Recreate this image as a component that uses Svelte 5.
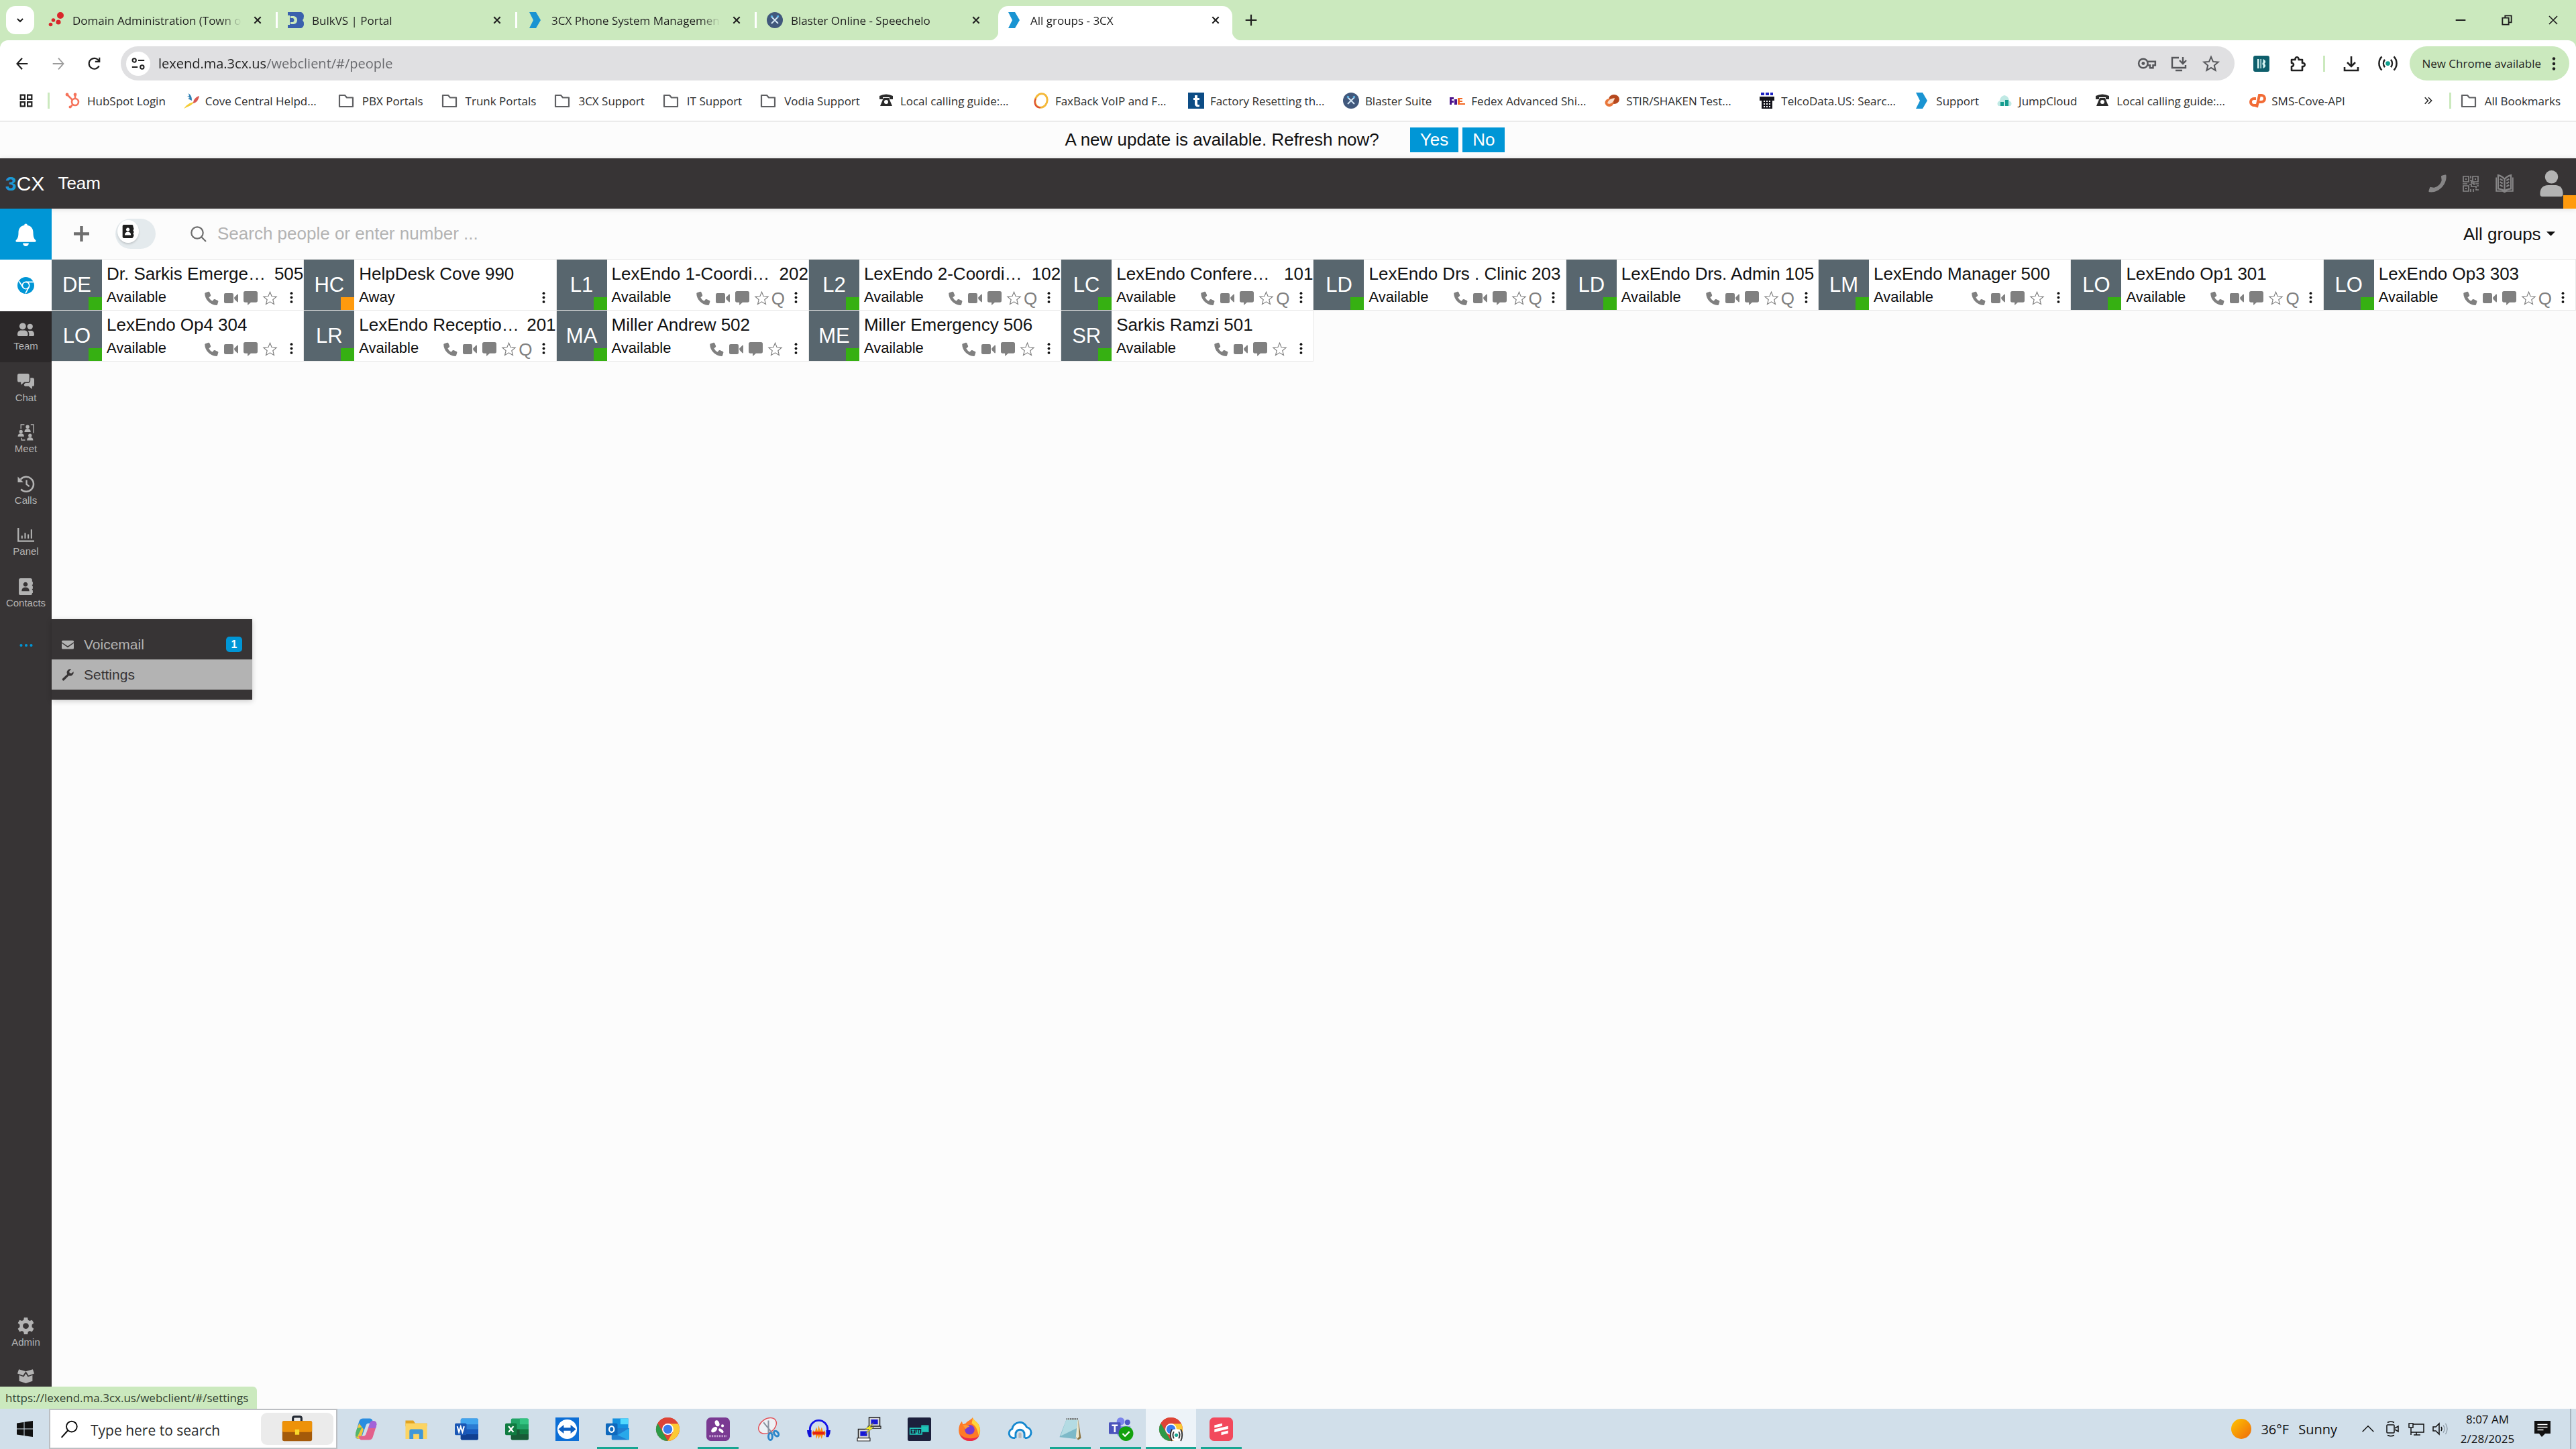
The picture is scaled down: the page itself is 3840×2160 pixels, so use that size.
<script>
     const tabs = [
          { title: 'Domain Administration (Town o', icon: 'dots' },
          { title: 'BulkVS | Portal', icon: 'bulk' },
          { title: '3CX Phone System Managemen', icon: 'arrow3cx' },
          { title: 'Blaster Online - Speechelo', icon: 'blaster' },
          { title: 'All groups - 3CX', icon: 'arrow3cx', active: true },
     ];

     const bookmarks = [
          { title: 'HubSpot Login', icon: 'hubspot' },
          { title: 'Cove Central Helpd...', icon: 'cove', long: true },
          { title: 'PBX Portals', icon: 'folder', folder: true },
          { title: 'Trunk Portals', icon: 'folder', folder: true },
          { title: '3CX Support', icon: 'folder', folder: true },
          { title: 'IT Support', icon: 'folder', folder: true },
          { title: 'Vodia Support', icon: 'folder', folder: true },
          { title: 'Local calling guide:...', icon: 'oldphone', long: true },
          { title: 'FaxBack VoIP and F...', icon: 'fax', long: true },
          { title: 'Factory Resetting th...', icon: 'tsquare', long: true },
          { title: 'Blaster Suite', icon: 'blaster' },
          { title: 'Fedex Advanced Shi...', icon: 'fedex', long: true },
          { title: 'STIR/SHAKEN Test...', icon: 'stir', long: true },
          { title: 'TelcoData.US: Searc...', icon: 'telco', long: true },
          { title: 'Support', icon: 'arrow3cx' },
          { title: 'JumpCloud', icon: 'jump' },
          { title: 'Local calling guide:...', icon: 'oldphone', long: true },
          { title: 'SMS-Cove-API', icon: 'cpanel' },
     ];

     const people = [
          { initials: 'DE', name: 'Dr. Sarkis Emerge…', ext: '505', cut: true },
          { initials: 'HC', name: 'HelpDesk Cove', ext: '990', away: true },
          { initials: 'L1', name: 'LexEndo 1-Coordi…', ext: '202', cut: true, queue: true },
          { initials: 'L2', name: 'LexEndo 2-Coordi…', ext: '102', cut: true, queue: true },
          { initials: 'LC', name: 'LexEndo Confere…', ext: '101', cut: true, queue: true },
          { initials: 'LD', name: 'LexEndo Drs . Clinic', ext: '203', queue: true },
          { initials: 'LD', name: 'LexEndo Drs. Admin', ext: '105', queue: true },
          { initials: 'LM', name: 'LexEndo Manager', ext: '500' },
          { initials: 'LO', name: 'LexEndo Op1', ext: '301', queue: true },
          { initials: 'LO', name: 'LexEndo Op3', ext: '303', queue: true },
          { initials: 'LO', name: 'LexEndo Op4', ext: '304' },
          { initials: 'LR', name: 'LexEndo Receptio…', ext: '201', cut: true, queue: true },
          { initials: 'MA', name: 'Miller Andrew', ext: '502' },
          { initials: 'ME', name: 'Miller Emergency', ext: '506' },
          { initials: 'SR', name: 'Sarkis Ramzi', ext: '501' },
     ];

     const nav = [
          { label: 'Team', icon: 'team', active: true },
          { label: 'Chat', icon: 'chats' },
          { label: 'Meet', icon: 'meet' },
          { label: 'Calls', icon: 'history' },
          { label: 'Panel', icon: 'chart' },
          { label: 'Contacts', icon: 'contacts' },
     ];

     const apps = [
          { name: 'Copilot', icon: 'copilot' },
          { name: 'File Explorer', icon: 'explorer' },
          { name: 'Word', icon: 'word' },
          { name: 'Excel', icon: 'excel' },
          { name: 'TeamViewer', icon: 'teamviewer' },
          { name: 'Outlook', icon: 'outlook', open: true },
          { name: 'Chrome', icon: 'chrome' },
          { name: 'Splashtop Business', icon: 'splashtop', open: true },
          { name: 'Snipping Tool', icon: 'snip' },
          { name: 'Audacity', icon: 'audacity' },
          { name: 'PuTTY', icon: 'putty' },
          { name: 'TuneIn', icon: 'tune' },
          { name: 'Firefox', icon: 'firefox' },
          { name: 'Cloud Drive', icon: 'cloud' },
          { name: 'Notepad', icon: 'notepad', open: true },
          { name: 'Teams', icon: 'teams', open: true },
          { name: 'Chrome window', icon: 'chromecast', open: true, current: true },
          { name: 'Recorder', icon: 'recorder', open: true },
     ];

     const chromeDisc = `<circle cx="12" cy="12" r="12" fill="#dd4436"/><path d="M1.6 6 7 15.2 12 24A12 12 0 0 1 1.6 6z" fill="#2c9a48"/><path d="M12 24 17.2 15 12 6.4H22.6A12 12 0 0 1 12 24z" fill="#fcc934"/><path d="M1.6 6A12 12 0 0 1 22.6 6.4H12L7 9z" fill="#dd4436"/><circle cx="12" cy="12" r="5.8" fill="#fff"/><circle cx="12" cy="12" r="4.6" fill="#3b7ded"/>`;

     // Every icon is drawn on a 24 x 24 grid.
     const icons = {
          chevron: '<path d="m5 8.500 7 7 7-7" fill="none" stroke="currentColor" stroke-width="3.500"/>',
          close: '<path d="m4 4 16 16M20 4 4 20" fill="none" stroke="currentColor" stroke-width="3.600"/>',
          thinclose: '<path d="m3 3 18 18M21 3 3 21" fill="none" stroke="currentColor" stroke-width="2.400"/>',
          plus: '<path d="M12 2v20M2 12h20" fill="none" stroke="currentColor" stroke-width="2.600"/>',
          minus: '<path d="M1 12h22" stroke="currentColor" stroke-width="3"/>',
          restore: '<path d="M2 7h14v15H2zM8 7V2h14v15h-5" fill="none" stroke="currentColor" stroke-width="2.800"/>',
          back: '<path d="M22 12H3M12 2 3 12l9 10" fill="none" stroke="currentColor" stroke-width="2.600"/>',
          forward: '<path d="M2 12h19M12 2l9 10-9 10" fill="none" stroke="currentColor" stroke-width="2.200"/>',
          reload: '<path d="M20 16A9.500 9.500 0 1 1 20 7.500" fill="none" stroke="currentColor" stroke-width="2.600"/><path d="M22 1v8.500h-9V7H19.500V1z"/>',
          tune2: '<g fill="none" stroke="currentColor" stroke-width="2.400"><circle cx="5" cy="6" r="3.200"/><path d="M12 6h11M1 18h10"/><circle cx="19" cy="18" r="3.200"/></g>',
          key: '<g fill="none" stroke="currentColor" stroke-width="2.200"><circle cx="7" cy="12" r="6"/><path d="M13 9.500h10v5h-3V18h-4v-3.500h-3"/></g><circle cx="7" cy="12" r="2.200"/>',
          install: '<path d="M12 3H2v15h20v-4M7 22h10" fill="none" stroke="currentColor" stroke-width="2.400"/><path d="M18 2v9m-5-4 5 5 5-5" fill="none" stroke="currentColor" stroke-width="2.400"/>',
          star: '<path d="m12 1.800 3 7.100 7.600.6-5.800 5 1.800 7.500L12 18l-6.600 4 1.800-7.500-5.800-5 7.600-.6z" fill="none" stroke="currentColor" stroke-width="2"/>',
          thinstar: '<path d="m12 1.500 3 7.400 8 .6-6.100 5 2 7.900L12 18.100l-6.900 4.300 2-7.900-6.100-5 8-.6z" fill="none" stroke="currentColor" stroke-width="1.300"/>',
          hext: '<rect x="0" y="0" width="24" height="24" rx="3" fill="#0e5f6c"/><path d="M6 5h2.500v14H6zM10.500 5H12v14h-1.500zM13.500 10.500h1V5c4.500 2 4.500 5 2 7 2.500 2 2.500 5-2 7v-5.500h-1z" fill="#d9f6f4"/>',
          puzzle: '<path d="M3 6h5.500c-1-5 6-5 5 0H19v5c5-1 5 6 0 5v6H3v-6c4 0 4-5 0-5z" fill="none" stroke="currentColor" stroke-width="2.600" stroke-linejoin="round"/>',
          download: '<path d="M12 1v15M6 10l6 6 6-6M2 17v5h20v-5" fill="none" stroke="currentColor" stroke-width="2.600"/>',
          cast: '<g fill="none" stroke="currentColor" stroke-width="2.200"><path d="M4 3a13 13 0 0 0 0 18M8 7a8 8 0 0 0 0 10M20 3a13 13 0 0 1 0 18M16 7a8 8 0 0 1 0 10"/></g><circle cx="12" cy="12" r="3" fill="#11a08f"/>',
          kebab: '<circle cx="12" cy="3" r="2.700"/><circle cx="12" cy="12" r="2.700"/><circle cx="12" cy="21" r="2.700"/>',
          apps: '<path d="M2 2h7.500v7.500H2zM14.500 2H22v7.500h-7.500zM2 14.500h7.500V22H2zM14.500 14.500H22V22h-7.500z" fill="none" stroke="currentColor" stroke-width="2.600"/>',
          more: '<path d="m3 4 8 8-8 8M12 4l8 8-8 8" fill="none" stroke="currentColor" stroke-width="2.600"/>',
          folder: '<path d="M2 4h8l3 3.500h9V21H2z" fill="none" stroke="currentColor" stroke-width="2.200" stroke-linejoin="round"/>',

          dots: '<g fill="#d9272b"><circle cx="18" cy="5" r="5"/><circle cx="15" cy="15" r="3.600"/><circle cx="7.500" cy="12" r="2.800"/><circle cx="3.500" cy="18.500" r="2.800"/></g>',
          bulk: '<path d="M0 0h20q4 2 4 6t-2 6q2 2 2 6t-4 6H0v-5h3V5H0z" fill="#3a61ad"/><path d="M4 6h5q5 1 5 6t-5 6H4v-3h4q3-3 0-6H4z" fill="#cbe9be"/>',
          arrow3cx: '<path d="M3 0h10l7 12-7 12H3l6-12z" fill="#1a94d2"/>',
          blaster: '<circle cx="12" cy="12" r="12" fill="#41587c"/><path d="m7 7 10 10M17 7 7 17" stroke="#d7e9f7" stroke-width="1.900"/><path d="m6 6 3 1M18 6l-3 1" stroke="#5bb5ea" stroke-width="2.500"/>',
          hubspot: '<g fill="none" stroke="#f5735b" stroke-width="2.600"><circle cx="15" cy="14" r="5"/><path d="M15 9V3M11 11 3 3M11 18l-3 4"/></g><g fill="#f5735b"><circle cx="3" cy="3" r="2.400"/><circle cx="15" cy="3" r="2.400"/><circle cx="7.500" cy="21.500" r="2"/></g>',
          cove: '<path d="M1 24c4-6 9-9 15-10-2 5-8 6-15 10z" fill="#f4cc34"/><path d="M8 1c4 3 5 6 5 11L7 9l3-1-4-3 3 .5z" fill="#2d7fb3"/><path d="M24 5c-1 6-4 10-9 11 0-5 3-9 9-11z" fill="#d95a53"/>',
          oldphone: '<path d="M2 5q10-5 20 0v5h-5V7H7v3H2z"/><path d="M8 8h8l5 12H3z"/><circle cx="12" cy="14" r="3" fill="#fff"/>',
          fax: '<ellipse cx="12" cy="12" rx="9" ry="10.500" transform="rotate(20 12 12)" fill="none" stroke="#f4b93a" stroke-width="3"/><path d="M4 9c-4 8 1 14 7 13" fill="none" stroke="#dc4c35" stroke-width="2"/>',
          tsquare: '<path d="M0 0h24v24H0z" fill="#0c4c85"/><path d="M10 4h4v4h3v3h-3v6q0 2 3 1v3q-7 1-7-4v-6H8V8h2z" fill="#fff"/>',
          fedex: '<path d="M1 7h6v3H4v2h3v3H4v3H1z" fill="#4d148c"/><path d="M8 10h4v8H8z" fill="#4d148c"/><path d="M13 8h7v2h-4v2h4v2h-4v2h8v2H13z" fill="#f26822"/>',
          stir: '<ellipse cx="15" cy="10" rx="8" ry="7" fill="#b6481d"/><ellipse cx="8" cy="15" rx="6.500" ry="6" fill="#e8763a"/><path d="M5 16q2-7 11-8-1 7-8 9z" fill="#fbe0cd"/>',
          telco: '<path d="M3 2h5M10 2h5M17 2h4" stroke="#1d22c4" stroke-width="4"/><path d="M1 6h22v6h-3v12H4V12H1z" fill="#15151c"/><path d="M7 13h10M7 17h10M7 21h10" stroke="#fff" stroke-width="2" stroke-dasharray="2 2"/>',
          jump: '<path d="M3 20q-4-5 2-8 1-7 7-8 6 1 7 8 6 3 2 8z" fill="#bfe9e4"/><path d="M6 20v-6h5v6M13 20V11h5v9" fill="#159c8f"/>',
          cpanel: '<g fill="none" stroke="#f26b35" stroke-width="4"><path d="M10 9H7a4.500 4.500 0 0 0 0 10h3M11 22l4-18h3a4.500 4.500 0 0 1 0 10h-4"/></g>',

          handset: '<path d="M1.500 2.500 6.500.8q1.300-.3 1.900.9l2 5q.4 1.200-.6 2L7.300 10.800q2.300 4.200 6 6.100l2.100-2.600q.8-.9 2-.5l5 2.100q1.200.6.900 1.900l-1.500 5q-.4 1.100-1.600 1.200C9 23.500.3 14 .3 4q.1-1.200 1.200-1.500z"/>',
          video: '<rect x="0" y="3.500" width="16" height="17" rx="2.500"/><path d="m17.500 10.500 5-5q1.500-.8 1.500 1v11q0 1.800-1.500 1l-5-5z"/>',
          message: '<path d="M3 0h18q3 0 3 3v13q0 3-3 3h-8.500L7 24v-5H3q-3 0-3-3V3q0-3 3-3z"/>',
          bell: '<path d="M10.300 2a1.700 1.700 0 0 1 3.400 0C18.500 3 20 6.500 20 10c0 5 1 6.500 2.700 8.200.6.800.3 2-1 2H2.300c-1.300 0-1.600-1.200-1-2C3 16.500 4 15 4 10c0-3.500 1.500-7 6.300-8zM8.800 21.500h6.400a3.200 3.200 0 0 1-6.400 0z"/>',
          chromeblue: '<circle cx="12" cy="12" r="12"/><g fill="none" stroke="#fff" stroke-width="1.600"><circle cx="12" cy="12" r="5"/><path d="M12 7h11M7.700 14.500 2.300 6M16.300 14.500 11.500 23.500"/></g>',
          team: '<circle cx="7.500" cy="7" r="4.700"/><circle cx="18" cy="7.500" r="4"/><path d="M0 19c0-4 2-6 5-6h5c3 0 5 2 5 6 0 1.300-.5 2-1.500 2h-12C.5 21 0 20.300 0 19zM16.500 21c.7-3-.1-5.500-1.500-7.500h5c2.500 0 4 2.500 4 5.500 0 1.300-.5 2-1.500 2z"/>',
          chats: '<path d="M2.500 1h12Q17 1 17 3.500v7q0 2.500-2.500 2.500H10l-5 4v-4H2.500Q0 13 0 10.500v-7Q0 1 2.500 1z"/><path d="M18.500 7H21.500q2.500 0 2.500 2.500v7q0 2.500-2.500 2.500H21v4l-5-4h-4q-2.500 0-2.500-2.500V16l2-1.500H15q3.500-.5 3.500-4z"/>',
          meet: '<circle cx="14.500" cy="4" r="2.600"/><path d="M10 11.500q0-4.500 4.500-4.500t4.500 4.500z"/><circle cx="5" cy="11" r="2.500"/><path d="M.5 18q0-4.300 4.500-4.300T9.500 18z"/><circle cx="18" cy="16.500" r="2.500"/><path d="M13.500 23.500q0-4.300 4.500-4.300t4.500 4.300z"/><path d="M5 7V1h5M19 1h4v12M6 20v3h5" fill="none" stroke="currentColor" stroke-width="1.300"/>',
          history: '<path d="M4.500 5.500A10.500 10.500 0 1 1 5 19.500" fill="none" stroke="currentColor" stroke-width="2.400"/><path d="M.5 1.500v8h8z"/><path d="M13 6.500v6l4 3" fill="none" stroke="currentColor" stroke-width="2.200"/>',
          chart: '<path d="M1.200 2v18.800H24" fill="none" stroke="currentColor" stroke-width="2.200"/><path d="M6.500 17v-4M11 17V9M15.500 17v-6M20 17V4" stroke="currentColor" stroke-width="2"/>',
          contacts: '<path fill-rule="evenodd" d="M4.500 0h14q2.500 0 2.500 2.500V5h1v4h-1v2h1v4h-1v2h1v4h-1v.5q0 2.500-2.500 2.500h-14Q2 24 2 21.500v-19Q2 0 4.500 0zM11.500 5.500a3.200 3.200 0 1 0 .01 0zM6 18.500h11q0-5.500-5.500-5.500T6 18.500z"/>',
          ellipsis: '<circle cx="3" cy="12" r="2.500"/><circle cx="12" cy="12" r="2.500"/><circle cx="21" cy="12" r="2.500"/>',
          mail: '<path d="M0 6V5.500Q0 3.500 2 3.500h20q2 0 2 2V7L12 15 0 7z"/><path d="m0 9 12 8.500L24 9v9.500q0 2-2 2H2q-2 0-2-2z"/>',
          wrench: '<path d="M23.500 5.500a7 7 0 0 1-9.500 8L5 22.800q-1.500 1.400-3.300 0-1.600-1.700 0-3.400L11 10.500a7 7 0 0 1 8-10L15 4.800l.6 3.600 3.600.6z"/>',
          gear: '<path fill-rule="evenodd" d="M9.500 0h5l.7 3.500 2.300 1.400 3.400-1.200 2.500 4.300-2.700 2.400v3.200l2.700 2.400-2.500 4.300-3.400-1.200-2.300 1.400-.7 3.500h-5l-.7-3.500-2.300-1.400-3.400 1.200L.6 16l2.700-2.400v-3.200L.6 8l2.500-4.300 3.400 1.200 2.300-1.400zM12 7.800a4.200 4.200 0 1 0 .01 0z"/>',
          box: '<path d="M2 3 12 6l10-3 2 6-8 3-4-6-4 6-8-3z"/><path d="M2.500 11.500 9 14l3-5 3 5 6.500-2.500V20L12 23l-9.500-3z"/>',
          bigplus: '<path d="M9.700 0h4.600v9.700H24v4.600h-9.700V24H9.700v-9.700H0V9.700h9.700z"/>',
          search: '<circle cx="10" cy="10" r="8.700" fill="none" stroke="currentColor" stroke-width="2.200"/><path d="m16.500 16.500 6.500 6.500" stroke="currentColor" stroke-width="2.200"/>',
          winsearch: '<circle cx="15" cy="8.500" r="7" fill="none" stroke="currentColor" stroke-width="1.700"/><path d="M10 13.500 1.500 23" stroke="currentColor" stroke-width="1.900"/>',
          caret: '<path d="M0 6h24L12 18z"/>',
          receiver: '<path d="M22 .5 17.800 1.500q-1 .3-.9 1.300l.6 5C16.500 12.500 12.500 16.500 7.500 17.500L3.300 16.800q-1-.2-1.500.8L.4 21.800q-.4 1.200.8 1.600C14 25 24.500 13 23.600 1.800 23.500.5 22.800.3 22 .5z"/>',
          qr: '<g fill="none" stroke="currentColor" stroke-width="1.700"><path d="M1 1h8v8H1zM15 1h8v8h-8zM1 15h8v8H1z"/><path d="M12 0v4M11 7h2v4h4v3M0 12h7M10 13h3v4M19 12h5M14 16h6v2M12 20v4M16 20v4M20 19v2h4M21 15h3"/></g><path d="M4 4h2v2H4zM18 4h2v2h-2zM4 18h2v2H4z"/>',
          book: '<path d="M12 6Q8 2 3.500 1v18Q8 19 12 22q4-3 8.500-3V1Q16 2 12 6zv16" fill="none" stroke="currentColor" stroke-width="2"/><path d="M1 4v18h8l3 1.500 3-1.500h8V4" fill="none" stroke="currentColor" stroke-width="1.600"/><path d="m6 6 3.500 2M6 10l3.500 2M6 14l3.500 2M18 6l-3.500 2M18 10l-3.500 2M18 14l-3.500 2" stroke="currentColor" stroke-width="1.900"/>',
          person: '<circle cx="12" cy="6" r="6"/><path d="M1.500 21.500c0-5 2.500-8 7.500-8h6c5 0 7.500 3 7.500 8 0 1.700-.6 2.500-2 2.500h-17c-1.400 0-2-.8-2-2.500z"/>',

          windows: '<path d="M0 3.400 10.500 2v9.500H0zM11.500 1.800 24 0v11.500H11.500zM0 12.500h10.500V22L0 20.600zM11.500 12.500H24V24l-12.500-1.800z"/>',
          briefcase: '<path d="M8 5V2q0-1.500 1.500-1.500h5Q16 .5 16 2v3" fill="none" stroke="#252b35" stroke-width="2"/><rect x="-2" y="4.500" width="28" height="19" rx="1.500" fill="#a45a0a"/><rect x="-2" y="4.500" width="28" height="10.500" rx="1.500" fill="#ee9209"/><path d="M10 12.500h4v5h-4z" fill="#f9d72b"/>',
          copilot: '<path d="M9 1h7q2 0 2.700 2l1 3h-5q-2 0-2.700 2L8 19q-.8 3-3.500 3Q0 22 1.500 16L5 4q1-3 4-3z" fill="#2a8de0"/><path d="M5 6 1.500 16q-1 5.500 3 6 2 0 3-3l2-7z" fill="#f1c63d"/><path d="M3 11 1.500 16Q1 19 3 20l5-10z" fill="#54b66b"/><path d="M15 23H8q-2 0-2.700-2l-1-2h5q2 0 2.700-2L16 6q.8-2.500 3.500-2.500Q24 4 22.500 9L19 20q-1 3-4 3z" fill="#e2618c"/><path d="m16 6-1.500 5h7.500l.5-2q1.500-5-3-5.500Q17 3.500 16 6z" fill="#a263d8"/>',
          explorer: '<path d="M1 3h8l2 3h12v3H1z" fill="#e2a321"/><path d="M1 6h22v16H1z" fill="#fcd462"/><path d="M5 22v-8q0-2 2-2h10q2 0 2 2v8h-4v-5H9v5z" fill="#3f97d8"/>',
          word: '<rect x="6" y="1" width="18" height="22" rx="1.500" fill="#2b7cd3"/><path d="M6 2.500Q6 1 7.500 1h15Q24 1 24 2.500V7H6z" fill="#41a5ee"/><path d="M6 17h18v4.500q0 1.500-1.500 1.500h-15Q6 23 6 21.500z" fill="#103f91"/><path d="M6 12h18v5H6z" fill="#185abd"/><rect y="6" width="12" height="12" rx="1.200" fill="#1a57b5"/><path d="m2.500 9 1.700 6L6 9.500 7.800 15l1.700-6" fill="none" stroke="#fff" stroke-width="1.400"/>',
          excel: '<rect x="6" y="1" width="18" height="22" rx="1.500" fill="#21a366"/><path d="M15 1h7.500Q24 1 24 2.500V7h-9z" fill="#33c481"/><path d="M6 12h9v5h9v4.500q0 1.500-1.500 1.500h-15Q6 23 6 21.500z" fill="#185c37"/><path d="M15 12h9v5h-9z" fill="#107c41"/><rect y="6" width="12" height="12" rx="1.200" fill="#107c41"/><path d="m3.500 9 5 6M8.500 9l-5 6" stroke="#fff" stroke-width="1.600"/>',
          teamviewer: '<path d="M0 0h24v24H0z" fill="#0d6fd6"/><circle cx="12" cy="12" r="10" fill="#fff"/><path d="m3 12 5.500-4.500v3h7v-3L21 12l-5.500 4.500v-3h-7v3z" fill="#0d5fc0"/>',
          outlook: '<rect x="7" y="1" width="16" height="12" fill="#1490df"/><path d="M15 1h8v6h-8z" fill="#50d9ff"/><path d="M6 11h18v11q0 1-1 1H7q-1 0-1-1z" fill="#1f7fd1"/><path d="m24 11-12 7 11 5q1 0 1-1z" fill="#28a8ea"/><rect y="6" width="12" height="12" rx="1.200" fill="#0f69bd"/><ellipse cx="6" cy="12" rx="2.500" ry="3" fill="none" stroke="#fff" stroke-width="1.500"/>',
          chrome: chromeDisc,
          splashtop: '<rect width="24" height="24" rx="4.500" fill="#7a3a92"/><g fill="#fff"><ellipse cx="11" cy="6" rx="2.200" ry="3.200" transform="rotate(-20 11 6)"/><ellipse cx="8" cy="12.500" rx="3.600" ry="2.200" transform="rotate(-40 8 12.500)"/><ellipse cx="15" cy="13.500" rx="3" ry="1.500" transform="rotate(40 15 13.500)"/><circle cx="16.500" cy="8.500" r="1.400"/></g><path d="M3 19h18" stroke="#c9a6d6" stroke-width="2" stroke-dasharray="1.500 1"/>',
          snip: '<ellipse cx="11" cy="8.500" rx="10" ry="7" transform="rotate(-35 11 8.500)" fill="#eef1f5" stroke="#e2545b" stroke-width="1"/><path d="m7 5 9 11M12 3v13" stroke="#8a93a0" stroke-width="1.400"/><g fill="none" stroke="#2d86c9" stroke-width="2"><ellipse cx="14" cy="19.500" rx="2" ry="3.500"/><ellipse cx="20" cy="16.500" rx="2" ry="3" transform="rotate(-40 20 16.500)"/></g>',
          audacity: '<path d="M3 16V12a9 9 0 0 1 18 0v4" fill="none" stroke="#1414e8" stroke-width="2"/><path d="M0 13h4.500v7H2q-2-3-2-7zM24 13h-4.500v7H22q2-3 2-7z" fill="#0f0fd8"/><path d="m5 16 1.500-3 1.500 2 1.500-5 1.500 4 1-6 1.500 6 1.500-4 1.500 5 1.500-2 1 3-1 3-1.500-2-1.500 5-1.500-4-1.500 4-1-4-1.500 4L8.500 16 7 19z" fill="#fd8f0b"/><path d="M6 16h12" stroke="#e42313" stroke-width="3"/>',
          putty: '<path d="M12 0h11v9H12zM1 12h11v9H1z" fill="#dadada" stroke="#222" stroke-width="1"/><path d="M14 2h7v5h-7zM3 14h7v5H3z" fill="#1717d6"/><path d="M11 9h13v2H11zM0 21h13v3H0z" fill="#fff" stroke="#222" stroke-width=".8"/><path d="m17 5-9 7h4l-4 5 9-7h-4z" fill="#f6ee1e" stroke="#555" stroke-width=".4"/>',
          tune: '<rect width="24" height="24" rx="1.500" fill="#1c203c"/><path d="M2.500 11h12v6h-12zM14.500 8.500h6.500v6h-6.500z" fill="none" stroke="#1fc3b8" stroke-width="1.200"/><path d="M4 13h3M5.500 13v3M8.500 12.500V16H10v-3.500M12 16v-3" stroke="#1fc3b8"/><path d="M15 9h6v5h-6z" fill="#1fc3b8"/>',
          firefox: '<path d="M12 24C5 24 .8 19 .8 13 .8 9 2 6.500 4 4l1 3 3-1c2-3 5-3 7-6 1 3 4 4 6 7 4 7 1 17-9 17z" fill="#ff7a26"/><path d="M15 0c1 3 4 4 6 7 2 3.500 2 8 0 11-1-5-2-9-7-12q1-3 1-6z" fill="#ffd43b"/><path d="M2 17c2 5 6 7 10 7 5 0 8-2 9.500-5-4 3-15 4-19.500-2z" fill="#e8294f"/><circle cx="12" cy="12.500" r="5" fill="#7a3bd0"/><path d="M5 8c3-1 5 0 7 1-2 1-3 1-4 3z" fill="#ff9a33"/>',
          cloud: '<path d="M7 21H5.500A4.800 4.800 0 0 1 4 11.700 7.800 7.800 0 0 1 19 10a5.600 5.600 0 0 1-.5 11H17" fill="#fff" stroke="#1588cf" stroke-width="2"/><path d="M7.500 21v-4a4.500 4.500 0 0 1 9 0v4" fill="#d3e0ea" stroke="#1588cf" stroke-width="2"/><path d="M10.500 21v-4q0-1.500 1.500-1.500t1.500 1.500v4z" fill="#b9b9bb"/>',
          notepad: '<path d="m20 2 3 19-3 2-2-2z" fill="#8c7340"/><path d="M8 1.500h12l1 18-2 2.500z" fill="#efe9d0"/><path d="M8 2h11.500L17.500 22 1 20z" fill="#7db9c8"/><path d="M8 2h11.500l-1 9L2 19z" fill="#b4dbe3"/><path d="M8 1.500h12" stroke="#666" stroke-width="1.800" stroke-dasharray="1 .8"/>',
          teams: '<circle cx="12" cy="4" r="4" fill="#7b83eb"/><circle cx="19" cy="5" r="2.700" fill="#5059c9"/><path d="M8 9h14v6q-1 6-7 6t-7-6z" fill="#7b83eb"/><rect y="5" width="12" height="12" rx="1" fill="#4b53bc"/><path d="M3 8h6M6 8v7" stroke="#fff" stroke-width="1.700"/><circle cx="17.500" cy="16.500" r="7.500" fill="#13a10e"/><path d="m14 16.500 2.500 2.500 4.500-4.500" fill="none" stroke="#fff" stroke-width="1.500"/>',
          chromecast: chromeDisc + '<rect x="11" y="12" width="13" height="12" rx="5" fill="#fff"/><path d="M13 12q-3 6 0 12M22 12q3 6 0 12M15 14.500q-2 3.500 0 7M20 14.500q2 3.500 0 7" fill="none" stroke="#333" stroke-width="1.300"/><circle cx="17.500" cy="18" r="1.800" fill="#18a693"/>',
          recorder: '<rect width="24" height="24" rx="4.500" fill="#f2495c"/><path d="m5 7.800 8-1.800v2.800l-8 1.800zM5 12l14-3.200v2.900L5 15zM12 15l7-1.600v2.900L12 18z" fill="#fff"/>',
          sun: '<defs><linearGradient id="sun" x1="0" y1="0" x2="1" y2="1"><stop offset="0" stop-color="#ffc400"/><stop offset="1" stop-color="#ee6a0c"/></linearGradient></defs><circle cx="12" cy="12" r="12" fill="url(#sun)"/>',
          up: '<path d="m2 17 10-10 10 10" fill="none" stroke="currentColor" stroke-width="1.800"/>',
          camera: '<g fill="none" stroke="currentColor" stroke-width="1.500"><rect x="4" y="6" width="11" height="12" rx="1"/><path d="m16 11 5-3v8l-5-3M5 2.500q5-2.500 10 0M5 21.500q5 2.500 10 0"/></g>',
          network: '<g fill="none" stroke="currentColor" stroke-width="1.500"><path d="M7 5h16v12H4v-5M12 17v4M8 21h10M1 4h6v6H1zM4 10v11"/></g>',
          speaker: '<path d="M1 9h4l5-5v16l-5-5H1z" fill="none" stroke="currentColor" stroke-width="1.500"/><path d="M13 9q2 3 0 6" fill="none" stroke="currentColor" stroke-width="1.500"/><path d="M16 6.500q4 5.500 0 11M19.500 4q5 8 0 16" fill="none" stroke="#8c99a5" stroke-width="1.300"/>',
          notice: '<path d="M0 0h24v19h-8l-5 5-4-5H0z"/><path d="M4.500 5.500h15M4.500 9.500h15M4.500 13.500h9" stroke="#fff" stroke-width="1.300"/>',
     };

     let query = $state('');
     let address = $state('lexend.ma.3cx.us/webclient/#/people');
     let taskSearch = $state('');
     let compact = $state(false);
     let showUpdate = $state(true);
</script>

{#snippet icon(name, size = '')}
     <svg class="icon {size}" viewBox="0 0 24 24" aria-hidden="true">{@html icons[name]}</svg>
{/snippet}

<div class="screen">
     <header class="tabstrip">
          <button class="tab-search" aria-label="Search tabs">{@render icon('chevron', 'xs')}</button>
          <div class="tabs">
               {#each tabs as tab}
                    <div class="tab" class:active={tab.active}>
                         {@render icon(tab.icon, 'm')}
                         <span class="tab-title">{tab.title}</span>
                         <button class="tab-close" aria-label="Close tab">{@render icon('close', 'xs')}</button>
                    </div>
               {/each}
          </div>
          <button class="new-tab" aria-label="New tab">{@render icon('plus', 's')}</button>
          <div class="window-buttons">
               <button aria-label="Minimize">{@render icon('minus', 's')}</button>
               <button aria-label="Restore">{@render icon('restore', 's')}</button>
               <button aria-label="Close">{@render icon('thinclose', 's')}</button>
          </div>
     </header>

     <div class="toolbar-bg">
          <div class="toolbar">
               <button aria-label="Back">{@render icon('back', 's')}</button>
               <button class="dim" aria-label="Forward">{@render icon('forward', 's')}</button>
               <button aria-label="Reload">{@render icon('reload', 's')}</button>
               <div class="omnibox">
                    <button class="site-info" aria-label="Site information">{@render icon('tune2', 's')}</button>
                    <input class="address" aria-label="Address" bind:value={address} />
                    <button aria-label="Passwords">{@render icon('key', 'l')}</button>
                    <button aria-label="Install app">{@render icon('install', 'm')}</button>
                    <button aria-label="Bookmark this tab">{@render icon('star', 'm')}</button>
               </div>
               <button class="tool" aria-label="Extension">{@render icon('hext', 'm')}</button>
               <button class="tool" aria-label="Extensions">{@render icon('puzzle', 'm')}</button>
               <span class="divider"></span>
               <button class="tool" aria-label="Downloads">{@render icon('download', 'm')}</button>
               <button class="tool" aria-label="Media">{@render icon('cast', 'l')}</button>
               <button class="update-pill">New Chrome available {@render icon('kebab', 's')}</button>
          </div>
     </div>

     <nav class="bookmarks" aria-label="Bookmarks">
          <button class="apps-button" aria-label="Apps">{@render icon('apps', 's')}</button>
          <span class="divider"></span>
          {#each bookmarks as mark}
               {#if mark.folder}
                    <button class="bookmark folder">{@render icon(mark.icon, 'm')}<span>{mark.title}</span></button>
               {:else}
                    <a class="bookmark" href="#/bookmark">{@render icon(mark.icon, 'm')}<span class:long={mark.long}>{mark.title}</span></a>
               {/if}
          {/each}
          <button class="overflow" aria-label="More bookmarks">{@render icon('more', 'xs')}</button>
          <span class="divider"></span>
          <button class="bookmark folder last">{@render icon('folder', 'm')}<span>All Bookmarks</span></button>
     </nav>

     {#if showUpdate}
          <div class="update">
               <span>A new update is available. Refresh now?</span>
               <div class="answers">
                    <button onclick={() => (showUpdate = false)}>Yes</button>
                    <button onclick={() => (showUpdate = false)}>No</button>
               </div>
          </div>
     {/if}

     <div class="appbar">
          <span class="logo"><b>3</b>CX</span>
          <h1>Team</h1>
          <div class="appbar-icons">
               <button aria-label="Dialer">{@render icon('receiver', 'l')}</button>
               <button aria-label="QR code">{@render icon('qr', 'm')}</button>
               <button aria-label="Guide">{@render icon('book', 'l')}</button>
          </div>
          <button class="profile" aria-label="Profile">
               {@render icon('person', 'xxl')}
               <span class="presence"></span>
          </button>
     </div>

     <div class="workspace">
          <aside class="sidebar">
               <a class="bell" href="#/notifications" aria-label="Notifications">{@render icon('bell', 'xl')}</a>
               <div class="nav">
                    <a class="nav-item white" href="#/extension" aria-label="Chrome extension">{@render icon('chromeblue', 'nav-icon')}</a>
                    {#each nav as item}
                         <a class="nav-item" class:active={item.active} href="#/{item.label.toLowerCase()}">
                              {@render icon(item.icon, 'nav-icon')}
                              <span>{item.label}</span>
                         </a>
                    {/each}
                    <div class="nav-item more">
                         <button aria-label="More">{@render icon('ellipsis', 's')}</button>
                         <div class="menu">
                              <a href="#/voicemail">{@render icon('mail', 'xs')}<span>Voicemail</span><b>1</b></a>
                              <a class="hover" href="#/settings">{@render icon('wrench', 'xs')}<span>Settings</span></a>
                         </div>
                    </div>
               </div>
               <div class="nav-bottom">
                    <a class="nav-item" href="#/admin">{@render icon('gear', 'nav-icon')}<span>Admin</span></a>
                    <a class="nav-item box" href="#/whats-new" aria-label="What's new">{@render icon('box', 'nav-icon')}</a>
               </div>
          </aside>

          <main>
               <div class="people-bar">
                    <button class="add" aria-label="Add">{@render icon('bigplus', 's')}</button>
                    <label class="switch">
                         <input type="checkbox" aria-label="Compact view" bind:checked={compact} />
                         <span class="knob">{@render icon('contacts', 's')}</span>
                    </label>
                    <label class="people-search">
                         {@render icon('search', 'm')}
                         <input type="text" placeholder="Search people or enter number ..." bind:value={query} />
                    </label>
                    <label class="groups">
                         <select aria-label="Group">
                              <option>All groups</option>
                         </select>
                         {@render icon('caret', 'caret')}
                    </label>
               </div>

               <div class="people">
                    {#each people as person}
                         <article class="person">
                              <div class="avatar">
                                   {person.initials}
                                   <span class="status" class:away={person.away}></span>
                              </div>
                              <div class="details">
                                   <div class="name" class:cut={person.cut}><span>{person.name}</span><span>{person.ext}</span></div>
                                   <div class="line">
                                        <span class="state">{person.away ? 'Away' : 'Available'}</span>
                                        {#if !person.away}
                                             <div class="actions" class:queue={person.queue}>
                                                  <button aria-label="Call">{@render icon('handset')}</button>
                                                  <button aria-label="Video">{@render icon('video')}</button>
                                                  <button aria-label="Chat">{@render icon('message')}</button>
                                                  <button aria-label="Favorite">{@render icon('thinstar')}</button>
                                                  {#if person.queue}<span class="q">Q</span>{/if}
                                             </div>
                                        {/if}
                                        <button class="dots" aria-label="More options">{@render icon('kebab', 'kebab')}</button>
                                   </div>
                              </div>
                         </article>
                    {/each}
               </div>
          </main>
          <div class="link-status">https://lexend.ma.3cx.us/webclient/#/settings</div>
     </div>

     <footer class="taskbar">
          <button class="start" aria-label="Start">{@render icon('windows', 'm')}</button>
          <label class="task-search">
               {@render icon('winsearch', 'l')}
               <input type="text" placeholder="Type here to search" bind:value={taskSearch} />
               <span class="highlight">{@render icon('briefcase', 'case')}</span>
          </label>
          <div class="apps">
               {#each apps as app}
                    <button class="app" class:open={app.open} class:current={app.current} aria-label={app.name}>{@render icon(app.icon, 'app-icon')}</button>
               {/each}
          </div>
          <div class="tray">
               <button class="weather">{@render icon('sun', 'xl')}<span>36°F</span><span>Sunny</span></button>
               <button aria-label="Hidden icons">{@render icon('up', 's')}</button>
               <button aria-label="Camera">{@render icon('camera', 'm')}</button>
               <button aria-label="Network">{@render icon('network', 'm')}</button>
               <button aria-label="Volume">{@render icon('speaker', 'm')}</button>
               <button class="clock"><span>8:07 AM</span><span>2/28/2025</span></button>
               <button class="notice" aria-label="Notification center">{@render icon('notice', 'm')}</button>
               <span class="peek"></span>
          </div>
     </footer>
</div>

<style>
     :global(body) {
          margin: 0;
          overflow: hidden;
     }

     .screen {
          --chrome-green: #cbe9be;
          --blue: #0096d6;
          --dark: #373435;
          height: 100vh;
          display: flex;
          flex-direction: column;
          background: #fcfcfc;
          color: #1f1f1f;
          font-family: "Open Sans", "Noto Sans", sans-serif;
          font-size: 17px;
     }

     .screen :global(*) {
          box-sizing: border-box;
     }

     button, input, select {
          font: inherit;
          color: inherit;
          background: none;
          border: none;
          padding: 0;
          margin: 0;
          outline: none;
     }

     button {
          display: flex;
          align-items: center;
          justify-content: center;
          flex: none;
     }

     a {
          color: inherit;
          text-decoration: none;
     }

     .icon {
          display: block;
          flex: none;
          width: 21px;
          height: 21px;
          fill: currentColor;
          overflow: visible;
     }

     .xs { width: 14px; height: 14px; }
     .s { width: 20px; height: 20px; }
     .m { width: 24px; height: 24px; }
     .l { width: 27px; height: 27px; }
     .xl { width: 30px; height: 30px; }
     .xxl { width: 39px; height: 39px; }

     .divider {
          flex: none;
          width: 3px;
          height: 24px;
          background: var(--chrome-green);
     }

     /* Browser tabs */
     .tabstrip {
          height: 60px;
          flex: none;
          display: flex;
          align-items: center;
          background: var(--chrome-green);
     }

     .tab-search {
          width: 42px;
          height: 42px;
          margin: 0 5px 0 9px;
          border-radius: 14px;
          background: #fff;
     }

     .tabs {
          display: flex;
          align-self: stretch;
          padding-top: 9px;
     }

     .tab {
          position: relative;
          width: 357px;
          height: 42px;
          padding: 0 17px 0 16px;
          display: flex;
          align-items: center;
          gap: 12px;
     }

     .tab:not(.active)::after {
          content: "";
          width: 3px;
          height: 24px;
          position: absolute;
          right: -1px;
          background: #fff;
     }

     .tab:nth-last-child(2)::after {
          display: none;
     }

     .tab.active {
          height: 51px;
          padding-bottom: 9px;
          background: #fff;
          border-radius: 15px 15px 0 0;
          width: 349px;
          margin: 0 4px;
          padding-left: 12px;
          padding-right: 13px;
     }

     .tab.active::before, .tab.active::after {
          content: "";
          position: absolute;
          bottom: 0;
          width: 14px;
          height: 14px;
          background: radial-gradient(circle at 0 0, transparent 14px, #fff 15px);
     }

     .tab.active::before { left: -14px; }
     .tab.active::after { right: -14px; transform: scaleX(-1); }

     .tab-title {
          flex: 1;
          overflow: hidden;
          white-space: nowrap;
          mask-image: linear-gradient(90deg, #000 88%, transparent);
     }

     .tab-close {
          width: 24px;
          height: 24px;
     }

     .new-tab {
          width: 42px;
          height: 42px;
          margin-left: 3px;
     }

     .window-buttons {
          display: flex;
          margin-left: auto;
     }

     .window-buttons button {
          width: 69px;
          height: 50px;
     }

     .window-buttons .icon {
          width: 16px;
          height: 16px;
     }

     /* Address row */
     .toolbar-bg {
          flex: none;
          background: var(--chrome-green);
     }

     .toolbar {
          height: 60px;
          display: flex;
          align-items: center;
          padding: 9px 10px 0 6px;
          border-radius: 12px 12px 0 0;
          background: #fff;
     }

     .toolbar > button {
          width: 54px;
          height: 51px;
     }

     .dim {
          color: #9b9b9b;
     }

     .omnibox {
          flex: 1;
          height: 51px;
          display: flex;
          align-items: center;
          margin: 0 13px 0 12px;
          padding: 0 11px 0 8px;
          border-radius: 26px;
          background: #e0e0e2;
          color: #55565a;
     }

     .omnibox button {
          width: 48px;
     }

     .omnibox .site-info {
          width: 36px;
          height: 36px;
          border-radius: 50%;
          background: #fff;
          color: #1f1f1f;
     }

     .address {
          flex: 1;
          height: 36px;
          margin-left: 12px;
          font-size: 20px;
          color: transparent;
          background: linear-gradient(90deg, #1f1f1f 160px, #66676b 160px);
          background-clip: text;
     }

     .toolbar .divider {
          margin: 0 12px 0 11px;
     }

     .toolbar > .update-pill {
          width: auto;
          margin-left: 6px;
          padding: 0 13px 0 18px;
          gap: 9px;
          border-radius: 26px;
          background: var(--chrome-green);
     }

     /* Bookmarks */
     .bookmarks {
          height: 61px;
          flex: none;
          display: flex;
          align-items: center;
          padding: 0 23px 0 17px;
          background: #fff;
          border-bottom: 1px solid #cfcfd0;
     }

     .apps-button {
          width: 44px;
     }

     .bookmarks .divider {
          margin: 0 10px;
     }

     .bookmark {
          display: flex;
          align-items: center;
          gap: 9px;
          padding: 0 13px;
          white-space: nowrap;
          color: #2b2b2b;
     }

     .bookmark.folder {
          gap: 12px;
          padding: 0 14px 0 13px;
     }

     .bookmark.folder .icon {
          color: #5f6063;
     }

     .long {
          width: 172px;
     }

     .overflow {
          margin-left: auto;
          margin-right: 16px;
     }

     .bookmark.folder.last {
          padding: 0 0 0 2px;
     }

     .bookmarks .overflow + .divider {
          margin-left: 8px;
          margin-right: 12px;
     }

     /* Update prompt */
     .update {
          height: 55px;
          flex: none;
          display: flex;
          align-items: center;
          justify-content: center;
          gap: 46px;
          padding-right: 9px;
          font-family: "Liberation Sans", Arial, sans-serif;
          font-size: 26px;
          color: #111;
     }

     .answers {
          display: flex;
          gap: 6px;
     }

     .answers button {
          height: 37px;
          padding: 0 15px;
          background: var(--blue);
          color: #fff;
     }

     /* 3CX header */
     .appbar {
          height: 75px;
          flex: none;
          display: flex;
          align-items: center;
          padding-left: 8px;
          background: var(--dark);
          color: #fff;
          font-family: "Liberation Sans", Arial, sans-serif;
          box-shadow: 0 1px 8px rgba(0, 0, 0, 0.12);
     }

     .logo {
          font-size: 30px;
     }

     .logo b {
          color: #1c98d4;
     }

     h1 {
          margin: 0 0 0 20px;
          font-size: 26px;
          font-weight: 400;
     }

     .appbar-icons {
          display: flex;
          margin-left: auto;
          color: #868586;
     }

     .appbar-icons button {
          width: 50px;
     }

     .profile {
          position: relative;
          width: 74px;
          height: 75px;
          margin-left: 8px;
          color: #b3b3b3;
     }

     .presence {
          position: absolute;
          right: 0;
          bottom: 0;
          width: 19px;
          height: 20px;
          background: #ff9a0d;
     }

     /* Main area */
     .workspace {
          position: relative;
          flex: 1;
          min-height: 0;
          display: flex;
          font-family: "Liberation Sans", Arial, sans-serif;
     }

     .sidebar {
          width: 77px;
          flex: none;
          display: flex;
          flex-direction: column;
          background: var(--dark);
          color: #b3b3b3;
          font-size: 15px;
          line-height: 18px;
     }

     .bell {
          height: 76px;
          display: flex;
          align-items: center;
          justify-content: center;
          background: var(--blue);
          color: #fff;
     }

     .bell .icon {
          width: 33px;
          height: 33px;
     }

     .nav {
          display: grid;
          grid-template-rows: repeat(8, 1fr);
          height: 613px;
     }

     .nav-item {
          display: flex;
          flex-direction: column;
          align-items: center;
          justify-content: center;
          gap: 3px;
     }

     .nav-item.white {
          background: #fff;
          color: var(--blue);
     }

     .nav-item.active {
          background: #2b2829;
     }

     .nav-icon {
          width: 25px;
          height: 25px;
     }

     .more {
          position: relative;
          color: var(--blue);
     }

     .menu {
          position: absolute;
          left: 77px;
          top: 0;
          z-index: 2;
          width: 299px;
          padding: 15px 0;
          background: var(--dark);
          color: #b3b3b3;
          font-size: 21px;
          box-shadow: 0 2px 8px rgba(0, 0, 0, 0.2);
     }

     .menu a {
          height: 45px;
          display: flex;
          align-items: center;
          gap: 15px;
          padding: 0 15px;
     }

     .menu .icon {
          width: 18px;
          height: 18px;
     }

     .menu b {
          width: 24px;
          height: 23px;
          margin-left: auto;
          border-radius: 5px;
          background: var(--blue);
          color: #fff;
          font-size: 16px;
          line-height: 23px;
          text-align: center;
     }

     .menu .hover {
          background: #b3b3b3;
          color: var(--dark);
     }

     .nav-bottom {
          margin-top: auto;
          display: grid;
          grid-template-rows: 77px 75px;
     }

     .nav-item.box {
          justify-content: flex-start;
          padding-top: 13px;
     }

     main {
          flex: 1;
          min-width: 0;
     }

     .people-bar {
          height: 76px;
          display: flex;
          align-items: center;
          padding: 0 31px 0 33px;
          border-bottom: 1px solid #e8e8e8;
          font-size: 26px;
     }

     .add {
          color: #6f6f6f;
     }

     .add .icon {
          width: 23px;
          height: 23px;
     }

     .switch {
          width: 60px;
          height: 45px;
          margin-left: 39px;
          padding: 2px 3px;
          border-radius: 23px;
          background: #e4eaed;
     }

     .switch input {
          position: absolute;
          opacity: 0;
     }

     .knob {
          width: 32px;
          height: 34px;
          display: flex;
          align-items: center;
          justify-content: center;
          border-radius: 50%;
          background: #fff;
          box-shadow: 0 2px 3px rgba(0, 0, 0, 0.15);
     }

     .people-search {
          flex: 1;
          display: flex;
          align-items: center;
          gap: 16px;
          margin-left: 52px;
          color: #6f6f6f;
     }

     .people-search input {
          flex: 1;
          height: 45px;
     }

     .people-search input::placeholder {
          color: #b3b3b3;
     }

     .groups {
          display: flex;
          align-items: center;
          gap: 8px;
          color: #111;
     }

     .groups select {
          appearance: none;
     }

     .caret {
          width: 13px;
          height: 13px;
     }

     .people {
          display: grid;
          grid-template-columns: repeat(10, 1fr);
          grid-auto-rows: 76px;
     }

     .person {
          display: flex;
          min-width: 0;
          background: #fff;
          border: solid #e8e8e8;
          border-width: 0 1px 1px 0;
          color: #111;
     }

     .avatar {
          position: relative;
          flex: none;
          width: 75px;
          display: flex;
          align-items: center;
          justify-content: center;
          background: #58666e;
          color: #fff;
          font-size: 31px;
     }

     .status {
          position: absolute;
          right: 0;
          bottom: 0;
          width: 20px;
          height: 19px;
          background: #36b012;
     }

     .status.away {
          background: #ff9a0d;
     }

     .details {
          flex: 1;
          min-width: 0;
          padding: 5px 0 0 7px;
     }

     .name {
          display: flex;
          gap: 7px;
          font-size: 26px;
          line-height: 32px;
          white-space: nowrap;
     }

     .name.cut {
          justify-content: space-between;
     }

     .line {
          height: 38px;
          display: flex;
          align-items: center;
          font-size: 22px;
     }

     .state {
          flex: 1;
     }

     .actions {
          display: flex;
          align-items: center;
          gap: 8px;
          margin-top: 3px;
          margin-right: 12px;
          color: #808080;
     }

     .actions.queue {
          margin-right: 8px;
     }

     .q {
          margin-left: -4px;
          font-size: 26px;
          line-height: 26px;
     }

     .dots {
          width: 18px;
          margin-right: 9px;
     }

     .kebab {
          width: 17px;
          height: 17px;
     }

     .link-status {
          position: absolute;
          left: 0;
          bottom: 0;
          z-index: 3;
          height: 33px;
          padding: 0 13px 0 8px;
          border-radius: 0 6px 0 0;
          background: var(--chrome-green);
          color: #33402f;
          font-family: "Open Sans", "Noto Sans", sans-serif;
          line-height: 34px;
     }

     /* Windows taskbar */
     .taskbar {
          height: 60px;
          flex: none;
          display: flex;
          background: #d1dfea;
          color: #111;
     }

     .start {
          width: 73px;
     }

     .task-search {
          width: 430px;
          margin-right: 5px;
          padding: 0 4px 0 15px;
          display: flex;
          align-items: center;
          gap: 18px;
          background: #fff;
          border: 2px solid #bcbfc3;
     }

     .task-search input {
          flex: 1;
          min-width: 0;
          padding-top: 3px;
          font-size: 21px;
     }

     .task-search input::placeholder {
          color: #2b2b2b;
     }

     .highlight {
          width: 108px;
          height: 48px;
          display: flex;
          align-items: center;
          justify-content: center;
          border-radius: 9px;
          background: #ebebeb;
     }

     .case {
          width: 38px;
          height: 38px;
     }

     .apps {
          display: flex;
     }

     .app {
          position: relative;
          width: 75px;
     }

     .app-icon {
          width: 35px;
          height: 35px;
     }

     .app.open::after {
          content: "";
          position: absolute;
          bottom: 0;
          left: 7px;
          right: 7px;
          height: 3px;
          background: #18a693;
     }

     .app.current {
          background: #edf3f8;
     }

     .app.current::after {
          left: 0;
          right: 0;
     }

     .tray {
          display: flex;
          margin-left: auto;
     }

     .tray button {
          width: 36px;
     }

     .tray .weather {
          width: auto;
          margin-right: 28px;
          gap: 14px;
          font-size: 20px;
     }

     .tray .clock {
          width: 104px;
          flex-direction: column;
          font-size: 17px;
          line-height: 29px;
     }

     .tray .notice {
          width: 60px;
          margin-right: 11px;
     }

     .peek {
          width: 9px;
          border-left: 2px solid #a9b5bf;
     }
</style>
